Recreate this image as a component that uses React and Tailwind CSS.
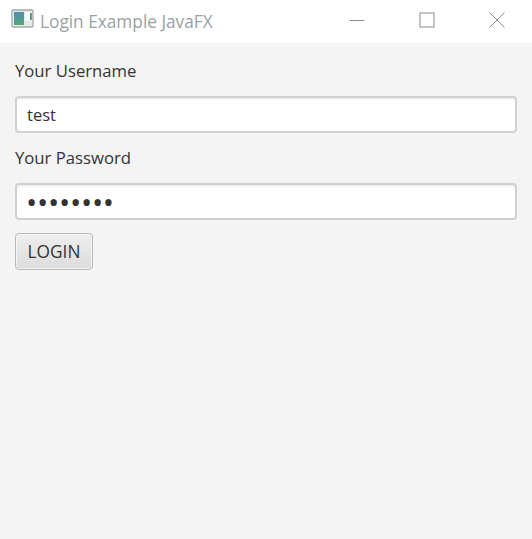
export default function App() {
  return (
    <div className="w-[532px] h-[539px] flex flex-col bg-[#f4f4f4] font-['Open_Sans',sans-serif] text-[#333333]">
      <div className="h-[43px] shrink-0 bg-white flex items-center pl-[11px]">
        <svg width="24" height="20" viewBox="0 0 24 20" className="shrink-0 mb-[5px]">
          <defs>
            <linearGradient id="g" x1="0" y1="0" x2="0" y2="1">
              <stop offset="0" stopColor="#4f8bb0" />
              <stop offset="1" stopColor="#56a874" />
            </linearGradient>
          </defs>
          <rect x="1" y="1" width="21" height="17" rx="1" fill="#e6e9ea" stroke="#a4a9ad" strokeWidth="1.3" />
          <rect x="3" y="3" width="10" height="13" fill="url(#g)" />
          <rect x="14" y="3" width="6" height="9" fill="#f5f6f6" />
          <rect x="19" y="4" width="2" height="7" fill="#5aa080" />
        </svg>
        <span className="ml-[5px] text-[17.25px] leading-none text-[#9a9fa6] mt-[1px]">Login Example JavaFX</span>
        <div className="ml-auto flex items-center h-full pb-[3px]">
          <button className="w-[70px] h-full flex items-center justify-center">
            <svg width="16" height="16" viewBox="0 0 16 16"><path d="M0.5 8.5H15.5" stroke="#8c8c8c" strokeWidth="1" /></svg>
          </button>
          <button className="w-[70px] h-full flex items-center justify-center">
            <svg width="16" height="16" viewBox="0 0 16 16"><rect x="1" y="1" width="14" height="14" fill="none" stroke="#8c8c8c" strokeWidth="1" /></svg>
          </button>
          <button className="w-[70px] h-full flex items-center justify-center">
            <svg width="16" height="16" viewBox="0 0 16 16"><path d="M0.5 0.5L15.5 15.5M15.5 0.5L0.5 15.5" stroke="#8c8c8c" strokeWidth="1" /></svg>
          </button>
        </div>
      </div>
      <div className="flex flex-col px-[15px] pt-[16px]">
        <label className="h-[24px] leading-[24px] text-[16.7px]">Your Username</label>
        <input readOnly value="test" className="mt-[13px] h-[37px] w-[502px] bg-white rounded-[4px] border-2 border-[#d0d0d0] px-[10px] text-[16.5px] text-[#333333] outline-none shadow-[inset_0_3px_3px_-2px_rgba(0,0,0,0.10)]" />
        <label className="mt-[13px] h-[24px] leading-[24px] text-[16.7px]">Your Password</label>
        <input readOnly type="password" value="password" className="mt-[13px] h-[37px] w-[502px] bg-white rounded-[4px] border-2 border-[#d0d0d0] pl-[9px] pr-[10px] text-[30px] tracking-[-0.3px] text-[#333333] outline-none shadow-[inset_0_3px_3px_-2px_rgba(0,0,0,0.10)]" />
        <button className="mt-[13px] self-start w-[78px] h-[37px] rounded-[4px] border border-[#b8b8b8] bg-gradient-to-b from-[#eeeeee] to-[#dcdcdc] text-[17.3px] text-[#333333] shadow-[inset_0_0_0_1px_rgba(255,255,255,0.6)]">LOGIN</button>
      </div>
    </div>
  );
}
